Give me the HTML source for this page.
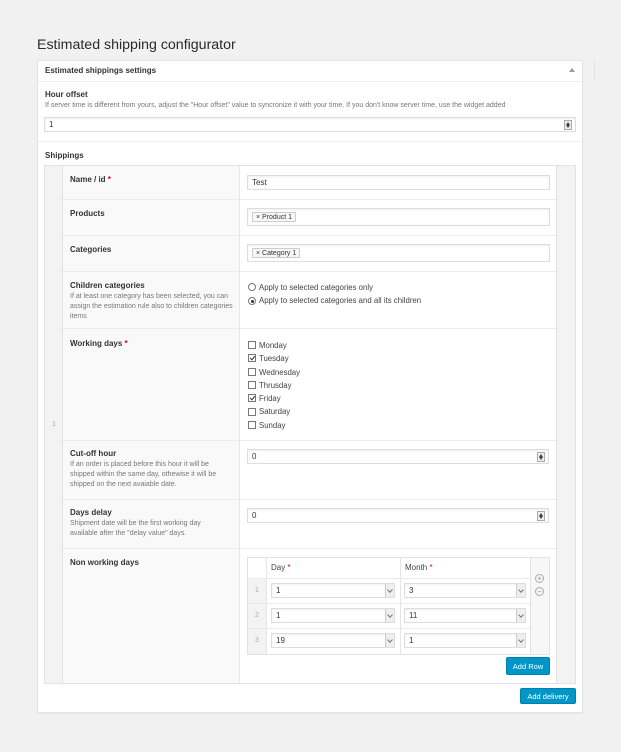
<!DOCTYPE html>
<html><head><meta charset="utf-8">
<style>
*{box-sizing:border-box;margin:0;padding:0}
body{width:621px;height:752px;background:#f1f1f1;font-family:"Liberation Sans",sans-serif;color:#333;position:relative;overflow:hidden;font-size:8px}
.a{position:absolute}
.b{font-weight:bold;color:#333;font-size:8px}
.d{color:#777;font-size:7px;line-height:10px}
.inp{position:absolute;background:#fff;border:1px solid #ddd;box-shadow:inset 0 1px 2px rgba(0,0,0,.07);font-size:8px;padding-left:4px;display:flex;align-items:center}
.spin{position:absolute;right:3px;top:2px;width:8px;height:10px;border:1px solid #aaa;background:#eee}
.spin:before{content:"";position:absolute;left:1px;top:1px;border:2px solid transparent;border-bottom:3px solid #444;border-top:0}
.spin:after{content:"";position:absolute;left:1px;bottom:1px;border:2px solid transparent;border-top:3px solid #444;border-bottom:0}
.req{color:#d00}
.tag{border:1px solid #ccc;background:#f7f7f7;font-size:7px;padding:0 3px;height:10px;line-height:9px;border-radius:1px}
.cb{position:absolute;width:8px;height:8px;border:1px solid #777;background:#fff}
.cb.on:after{content:"";position:absolute;left:2px;top:0;width:2px;height:4px;border:solid #333;border-width:0 1px 1px 0;transform:rotate(40deg)}
.lab{position:absolute;font-size:7.8px;color:#444}
.rad{position:absolute;width:8px;height:8px;border:1px solid #777;border-radius:50%;background:#fff}
.rad.on:after{content:"";position:absolute;left:1.5px;top:1.5px;width:3px;height:3px;border-radius:50%;background:#333}
.hl{position:absolute;height:1px;background:#eaeaea}
.vl{position:absolute;width:1px;background:#e5e5e5}
.sel{position:absolute;right:0;top:0;bottom:0;width:9px;background:#eee;border-left:1px solid #ccc}
.sel:after{content:"";position:absolute;left:2px;top:4px;width:3px;height:3px;border:solid #777;border-width:0 1px 1px 0;transform:rotate(45deg)}
.btn{position:absolute;background:#0096c8;border:1px solid #0080b0;color:#fff;font-size:7.5px;display:flex;align-items:center;justify-content:center;border-radius:2px}
.num{position:absolute;color:#aaa;font-size:7px}
</style></head><body>
<div class="a" style="left:37px;top:37px;font-size:14.2px;color:#2a2a2a">Estimated shipping configurator</div>
<div class="a" style="left:594px;top:60px;width:1px;height:20px;background:#e3e3e3"></div>
<div class="a" style="left:37px;top:60px;width:546px;height:653px;background:#fff;border:1px solid #e3e3e3;box-shadow:0 1px 1px rgba(0,0,0,.04)"></div>
<div class="a b" style="left:45px;top:66px">Estimated shippings settings</div>
<div class="a" style="left:569px;top:68px;border:3px solid transparent;border-bottom:4px solid #999;border-top:0"></div>
<div class="hl" style="left:38px;top:81px;width:544px;background:#eee"></div>
<div class="a b" style="left:45px;top:90px">Hour offset</div>
<div class="a d" style="left:45px;top:101px;white-space:nowrap">If server time is different from yours, adjust the "Hour offset" value to syncronize it with your time. If you don't know server time, use the widget added</div>
<div class="inp" style="left:44px;top:117px;width:532px;height:15px">1<div class="spin"></div></div>
<div class="hl" style="left:38px;top:141px;width:544px;background:#eee"></div>
<div class="a b" style="left:45px;top:151px">Shippings</div>

<div class="a" style="left:44px;top:165px;width:532px;height:519px;border:1px solid #e2e2e2;background:#fff"></div>
<div class="a" style="left:45px;top:166px;width:18px;height:517px;background:#f3f3f3;border-right:1px solid #e2e2e2"></div>
<div class="a" style="left:63px;top:166px;width:177px;height:517px;background:#f9f9f9;border-right:1px solid #e8e8e8"></div>
<div class="a" style="left:556px;top:166px;width:19px;height:517px;background:#f3f3f3;border-left:1px solid #e2e2e2"></div>
<div class="num" style="left:52px;top:421px">1</div>
<div class="hl" style="left:63px;top:199px;width:493px"></div>
<div class="hl" style="left:63px;top:235px;width:493px"></div>
<div class="hl" style="left:63px;top:271px;width:493px"></div>
<div class="hl" style="left:63px;top:328px;width:493px"></div>
<div class="hl" style="left:63px;top:440px;width:493px"></div>
<div class="hl" style="left:63px;top:499px;width:493px"></div>
<div class="hl" style="left:63px;top:548px;width:493px"></div>

<div class="a b" style="left:70px;top:175px">Name / id <span class="req">*</span></div>
<div class="inp" style="left:247px;top:175px;width:303px;height:15px">Test</div>
<div class="a b" style="left:70px;top:209px">Products</div>
<div class="inp" style="left:247px;top:208px;width:303px;height:18px;padding-left:4px"><span class="tag">× Product 1</span></div>
<div class="a b" style="left:70px;top:245px">Categories</div>
<div class="inp" style="left:247px;top:244px;width:303px;height:18px;padding-left:4px"><span class="tag">× Category 1</span></div>

<div class="a b" style="left:70px;top:281px">Children categories</div>
<div class="a d" style="left:70px;top:292px;width:168px">If at least one category has been selected, you can assign the estimation rule also to children categories items</div>
<div class="rad" style="left:248px;top:283px"></div><div class="lab" style="left:259px;top:283px">Apply to selected categories only</div>
<div class="rad on" style="left:248px;top:297px"></div><div class="lab" style="left:259px;top:296px">Apply to selected categories and all its children</div>

<div class="a b" style="left:70px;top:339px">Working days <span class="req">*</span></div>
<div class="cb" style="left:248px;top:341px"></div><div class="lab" style="left:259px;top:341px">Monday</div>
<div class="cb on" style="left:248px;top:354px"></div><div class="lab" style="left:259px;top:354px">Tuesday</div>
<div class="cb" style="left:248px;top:368px"></div><div class="lab" style="left:259px;top:368px">Wednesday</div>
<div class="cb" style="left:248px;top:381px"></div><div class="lab" style="left:259px;top:381px">Thrusday</div>
<div class="cb on" style="left:248px;top:394px"></div><div class="lab" style="left:259px;top:394px">Friday</div>
<div class="cb" style="left:248px;top:408px"></div><div class="lab" style="left:259px;top:407px">Saturday</div>
<div class="cb" style="left:248px;top:421px"></div><div class="lab" style="left:259px;top:421px">Sunday</div>

<div class="a b" style="left:70px;top:449px">Cut-off hour</div>
<div class="a d" style="left:70px;top:460px;width:160px">If an order is placed before this hour it will be shipped within the same day, othewise it will be shipped on the next avaiable date.</div>
<div class="inp" style="left:247px;top:449px;width:302px;height:15px">0<div class="spin"></div></div>

<div class="a b" style="left:70px;top:508px">Days delay</div>
<div class="a d" style="left:70px;top:519px;width:150px">Shipment date will be the first working day available after the "delay value" days.</div>
<div class="inp" style="left:247px;top:508px;width:302px;height:15px">0<div class="spin"></div></div>

<div class="a b" style="left:70px;top:558px">Non working days</div>
<div class="a" style="left:247px;top:557px;width:284px;height:98px;border:1px solid #e2e2e2;background:#fff"></div>
<div class="a" style="left:248px;top:578px;width:18px;height:76px;background:#f3f3f3"></div>
<div class="a" style="left:530px;top:557px;width:20px;height:98px;border:1px solid #e2e2e2;background:#f7f7f7"></div>
<div class="vl" style="left:266px;top:557px;height:98px"></div>
<div class="vl" style="left:400px;top:557px;height:98px"></div>
<div class="hl" style="left:248px;top:578px;width:282px"></div>
<div class="hl" style="left:248px;top:603px;width:282px"></div>
<div class="hl" style="left:248px;top:628px;width:282px"></div>
<div class="a" style="left:271px;top:563px;font-size:8px;color:#444">Day <span class="req">*</span></div>
<div class="a" style="left:405px;top:563px;font-size:8px;color:#444">Month <span class="req">*</span></div>
<div class="num" style="left:255px;top:587px">1</div>
<div class="num" style="left:255px;top:612px">2</div>
<div class="num" style="left:255px;top:637px">3</div>
<div class="inp" style="left:271px;top:583px;width:124px;height:15px">1<div class="sel"></div></div>
<div class="inp" style="left:404px;top:583px;width:122px;height:15px">3<div class="sel"></div></div>
<div class="inp" style="left:271px;top:608px;width:124px;height:15px">1<div class="sel"></div></div>
<div class="inp" style="left:404px;top:608px;width:122px;height:15px">11<div class="sel"></div></div>
<div class="inp" style="left:271px;top:633px;width:124px;height:15px">19<div class="sel"></div></div>
<div class="inp" style="left:404px;top:633px;width:122px;height:15px">1<div class="sel"></div></div>
<div class="a" style="left:535px;top:574px;width:9px;height:9px;border:1px solid #aaa;border-radius:50%;color:#999;font-size:8px;line-height:7px;text-align:center">+</div>
<div class="a" style="left:535px;top:587px;width:9px;height:9px;border:1px solid #aaa;border-radius:50%;color:#999;font-size:8px;line-height:7px;text-align:center">−</div>
<div class="btn" style="left:506px;top:657px;width:44px;height:18px">Add Row</div>
<div class="btn" style="left:520px;top:688px;width:56px;height:16px">Add delivery</div>
</body></html>
